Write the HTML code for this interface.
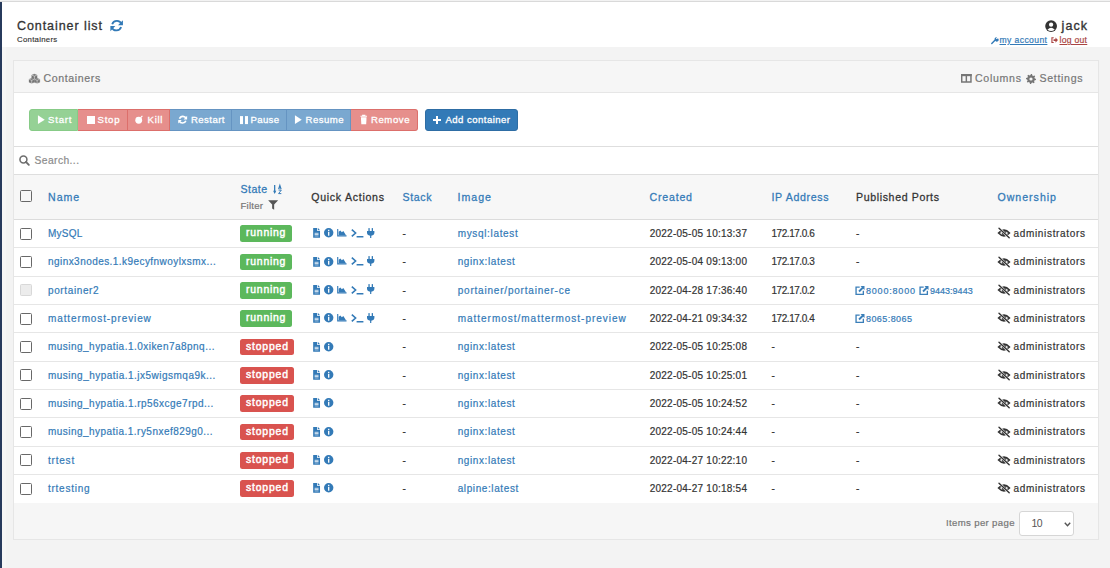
<!DOCTYPE html>
<html><head><meta charset="utf-8"><title>Container list</title>
<style>
html,body{margin:0;padding:0;}
body{width:1110px;height:568px;overflow:hidden;position:relative;background:#f3f3f3;font-family:"Liberation Sans",sans-serif;}
.t{position:absolute;white-space:nowrap;line-height:1;}
svg{overflow:visible;}
</style></head><body>
<div style="position:absolute;left:0px;top:0px;width:1110px;height:1px;background:#f2f2f2;"></div>
<div style="position:absolute;left:0px;top:1px;width:1110px;height:1px;background:#d9d9d9;"></div>
<div style="position:absolute;left:0px;top:2px;width:1110px;height:45px;background:#fff;"></div>
<div style="position:absolute;left:0px;top:2px;width:2px;height:566px;background:#273a5c;"></div>
<div style="position:absolute;left:2px;top:47px;width:4px;height:521px;background:#f6f6f6;"></div>
<div style="position:absolute;left:13px;top:60px;width:1086px;height:480px;background:#fff;border:1px solid #e6e6e6;box-sizing:border-box;"></div>
<div style="position:absolute;left:14px;top:61px;width:1084px;height:32px;background:#f6f6f6;border-bottom:1px solid #e6e6e6;box-sizing:border-box;"></div>
<div style="position:absolute;left:14px;top:146px;width:1084px;height:1px;background:#dedede;"></div>
<div style="position:absolute;left:14px;top:174px;width:1084px;height:1px;background:#dedede;"></div>
<div style="position:absolute;left:14px;top:175px;width:1084px;height:44.4px;background:#f7f7f7;"></div>
<div style="position:absolute;left:14px;top:219px;width:1084px;height:1px;background:#dcdcdc;"></div>
<div style="position:absolute;left:14px;top:247px;width:1084px;height:1px;background:#e6e6e6;"></div>
<div style="position:absolute;left:14px;top:276px;width:1084px;height:1px;background:#e6e6e6;"></div>
<div style="position:absolute;left:14px;top:304px;width:1084px;height:1px;background:#e6e6e6;"></div>
<div style="position:absolute;left:14px;top:332px;width:1084px;height:1px;background:#e6e6e6;"></div>
<div style="position:absolute;left:14px;top:361px;width:1084px;height:1px;background:#e6e6e6;"></div>
<div style="position:absolute;left:14px;top:389px;width:1084px;height:1px;background:#e6e6e6;"></div>
<div style="position:absolute;left:14px;top:417px;width:1084px;height:1px;background:#e6e6e6;"></div>
<div style="position:absolute;left:14px;top:446px;width:1084px;height:1px;background:#e6e6e6;"></div>
<div style="position:absolute;left:14px;top:474px;width:1084px;height:1px;background:#e6e6e6;"></div>
<div style="position:absolute;left:14px;top:503px;width:1084px;height:36px;background:#f6f6f6;"></div>
<div style="position:absolute;left:29px;top:109px;width:49px;height:22px;background:#95d195;border:1px solid #87cb87;box-sizing:border-box;border-radius:3px 0 0 3px;"></div>
<div style="position:absolute;left:78px;top:109px;width:50px;height:22px;background:#e68f8c;border:1px solid #dc6f6b;box-sizing:border-box;border-left:none;"></div>
<div style="position:absolute;left:128px;top:109px;width:42px;height:22px;background:#e68f8c;border:1px solid #dc6f6b;box-sizing:border-box;border-left:none;"></div>
<div style="position:absolute;left:170px;top:109px;width:62px;height:22px;background:#7aa8d0;border:1px solid #6594c2;box-sizing:border-box;border-left:none;"></div>
<div style="position:absolute;left:232px;top:109px;width:55px;height:22px;background:#7aa8d0;border:1px solid #6594c2;box-sizing:border-box;border-left:none;"></div>
<div style="position:absolute;left:287px;top:109px;width:64px;height:22px;background:#7aa8d0;border:1px solid #6594c2;box-sizing:border-box;border-left:none;"></div>
<div style="position:absolute;left:351px;top:109px;width:67px;height:22px;background:#e68f8c;border:1px solid #dc6f6b;box-sizing:border-box;border-left:none;border-radius:0 3px 3px 0;"></div>
<div style="position:absolute;left:425px;top:109px;width:93px;height:22px;background:#337ab7;border:1px solid #2e6da4;box-sizing:border-box;border-radius:3px;"></div>
<div style="position:absolute;left:1019.2px;top:511.2px;width:55.2px;height:24.6px;background:#fff;border:1px solid #d6d6d6;box-sizing:border-box;border-radius:3px;"></div>
<svg style="position:absolute;left:1064.3px;top:521.8px;" width="7" height="5" viewBox="0 0 7 5"><path d="M0.8 0.8 L3.5 3.8 L6.2 0.8" fill="none" stroke="#555" stroke-width="1.4"/></svg>
<div style="position:absolute;left:20px;top:189.5px;width:12px;height:12px;border:1.8px solid #686868;box-sizing:border-box;border-radius:1.5px;"></div>
<div style="position:absolute;left:20px;top:227.6px;width:12px;height:12px;border:1.8px solid #686868;box-sizing:border-box;border-radius:1.5px;"></div>
<div style="position:absolute;left:20px;top:255.9px;width:12px;height:12px;border:1.8px solid #686868;box-sizing:border-box;border-radius:1.5px;"></div>
<div style="position:absolute;left:20px;top:284.3px;width:12px;height:12px;border:1.8px solid #d8d8d8;box-sizing:border-box;border-radius:1.5px;background:#ececec;"></div>
<div style="position:absolute;left:20px;top:312.6px;width:12px;height:12px;border:1.8px solid #686868;box-sizing:border-box;border-radius:1.5px;"></div>
<div style="position:absolute;left:20px;top:340.9px;width:12px;height:12px;border:1.8px solid #686868;box-sizing:border-box;border-radius:1.5px;"></div>
<div style="position:absolute;left:20px;top:369.2px;width:12px;height:12px;border:1.8px solid #686868;box-sizing:border-box;border-radius:1.5px;"></div>
<div style="position:absolute;left:20px;top:397.6px;width:12px;height:12px;border:1.8px solid #686868;box-sizing:border-box;border-radius:1.5px;"></div>
<div style="position:absolute;left:20px;top:425.9px;width:12px;height:12px;border:1.8px solid #686868;box-sizing:border-box;border-radius:1.5px;"></div>
<div style="position:absolute;left:20px;top:454.2px;width:12px;height:12px;border:1.8px solid #686868;box-sizing:border-box;border-radius:1.5px;"></div>
<div style="position:absolute;left:20px;top:482.6px;width:12px;height:12px;border:1.8px solid #686868;box-sizing:border-box;border-radius:1.5px;"></div>
<div style="position:absolute;left:240px;top:225.3px;width:51.9px;height:16.8px;background:#5cb85c;border-radius:2.5px;"></div>
<div style="position:absolute;left:240px;top:253.6px;width:51.9px;height:16.8px;background:#5cb85c;border-radius:2.5px;"></div>
<div style="position:absolute;left:240px;top:282.0px;width:51.9px;height:16.8px;background:#5cb85c;border-radius:2.5px;"></div>
<div style="position:absolute;left:240px;top:310.3px;width:51.9px;height:16.8px;background:#5cb85c;border-radius:2.5px;"></div>
<div style="position:absolute;left:240px;top:338.6px;width:53.7px;height:16.8px;background:#d9534f;border-radius:2.5px;"></div>
<div style="position:absolute;left:240px;top:366.9px;width:53.7px;height:16.8px;background:#d9534f;border-radius:2.5px;"></div>
<div style="position:absolute;left:240px;top:395.3px;width:53.7px;height:16.8px;background:#d9534f;border-radius:2.5px;"></div>
<div style="position:absolute;left:240px;top:423.6px;width:53.7px;height:16.8px;background:#d9534f;border-radius:2.5px;"></div>
<div style="position:absolute;left:240px;top:451.9px;width:53.7px;height:16.8px;background:#d9534f;border-radius:2.5px;"></div>
<div style="position:absolute;left:240px;top:480.3px;width:53.7px;height:16.8px;background:#d9534f;border-radius:2.5px;"></div>
<svg style="position:absolute;left:109.6px;top:18.7px;" width="13.3" height="13.3" viewBox="0 0 14 14"><path d="M12.2 5.2 A5.3 5.3 0 0 0 2.3 5.6" fill="none" stroke="#337ab7" stroke-width="1.9"/><path d="M13.6 1.2 L13.6 6.6 L8.4 6.6 Z" fill="#337ab7"/><path d="M1.8 8.8 A5.3 5.3 0 0 0 11.7 8.4" fill="none" stroke="#337ab7" stroke-width="1.9"/><path d="M0.4 12.8 L0.4 7.4 L5.6 7.4 Z" fill="#337ab7"/></svg>
<svg style="position:absolute;left:1045.4px;top:19.8px;" width="12.2" height="12.2" viewBox="0 0 12 12"><circle cx="6" cy="6" r="5.8" fill="#333"/><circle cx="6" cy="4.6" r="2.1" fill="#fff"/><path d="M2.4 9.6 Q6 5.8 9.6 9.6 Q6 12 2.4 9.6Z" fill="#fff"/></svg>
<svg style="position:absolute;left:990.8px;top:36.5px;" width="7.5" height="7" viewBox="0 0 8 8"><path d="M0.6 7.4 L4.2 3.8" stroke="#337ab7" stroke-width="1.6" stroke-linecap="round"/><path d="M4.2 3.8 A2.2 2.2 0 1 0 7.6 1.4 L6.6 2.4 L5.6 2.4 L5.6 1.4 L6.6 0.4 A2.2 2.2 0 0 0 4.2 3.8Z" fill="#337ab7"/></svg>
<svg style="position:absolute;left:1050.8px;top:37px;" width="7.2" height="6.2" viewBox="0 0 8 7"><path d="M3 0.8 L1 0.8 L1 6.2 L3 6.2" fill="none" stroke="#a94442" stroke-width="1.3"/><path d="M2.8 2.6 L5 2.6 L5 0.6 L7.8 3.5 L5 6.4 L5 4.4 L2.8 4.4Z" fill="#a94442"/></svg>
<svg style="position:absolute;left:28.5px;top:73.5px;" width="10.8" height="9.4" viewBox="0 0 12 10.4"><g fill="#767676" stroke="#767676" stroke-width="0.3" stroke-linejoin="round"><path d="M6 0 L9 1.2 L9 4.6 L6 5.8 L3 4.6 L3 1.2Z"/><path d="M3 4.6 L6 5.8 L6 9.2 L3 10.4 L0 9.2 L0 5.8Z"/><path d="M9 4.6 L12 5.8 L12 9.2 L9 10.4 L6 9.2 L6 5.8Z"/></g><g fill="none" stroke="#f6f6f6" stroke-width="0.6"><path d="M3.2 1.3 L6 2.4 L8.8 1.3 M6 2.4 V5.6"/><path d="M0.2 5.9 L3 7 L5.8 5.9 M3 7 V10.2"/><path d="M6.2 5.9 L9 7 L11.8 5.9 M9 7 V10.2"/></g></svg>
<svg style="position:absolute;left:961px;top:73.8px;" width="10.7" height="8.8" viewBox="0 0 11 9"><path d="M0.75 0.75 H10.25 V8.25 H0.75Z M5.5 2 V8.25" fill="none" stroke="#767676" stroke-width="1.5"/><rect x="0" y="0" width="11" height="2.2" fill="#767676"/></svg>
<svg style="position:absolute;left:1025.8px;top:74.3px;" width="10" height="10" viewBox="0 0 10 10"><path d="M10.00 5.00 L9.90 5.98 L8.42 6.42 L8.08 7.06 L8.54 8.54 L7.78 9.16 L6.42 8.42 L5.72 8.63 L5.00 10.00 L4.02 9.90 L3.58 8.42 L2.94 8.08 L1.46 8.54 L0.84 7.78 L1.58 6.42 L1.37 5.72 L0.00 5.00 L0.10 4.02 L1.58 3.58 L1.92 2.94 L1.46 1.46 L2.22 0.84 L3.58 1.58 L4.28 1.37 L5.00 0.00 L5.98 0.10 L6.42 1.58 L7.06 1.92 L8.54 1.46 L9.16 2.22 L8.42 3.58 L8.63 4.28Z" fill="#767676"/><circle cx="5" cy="5" r="1.6" fill="#f6f6f6"/></svg>
<svg style="position:absolute;left:37px;top:115px;" width="8.4" height="9.3" viewBox="0 0 8 10"><path d="M0.5 0.4 L7.8 5 L0.5 9.6Z" fill="#fff"/></svg>
<svg style="position:absolute;left:86.5px;top:115.8px;" width="8" height="8" viewBox="0 0 8 8"><rect width="8" height="8" fill="#fff"/></svg>
<svg style="position:absolute;left:135.2px;top:115px;" width="8.8" height="9" viewBox="0 0 9 9"><circle cx="3.8" cy="5.3" r="3.5" fill="#fff"/><path d="M5.8 2.6 L7.6 0.8" stroke="#fff" stroke-width="1.2"/></svg>
<svg style="position:absolute;left:177.6px;top:115px;" width="9.4" height="9.4" viewBox="0 0 14 14"><path d="M12.2 5.2 A5.3 5.3 0 0 0 2.3 5.6" fill="none" stroke="#fff" stroke-width="2.4"/><path d="M13.6 1.2 L13.6 6.6 L8.4 6.6 Z" fill="#fff"/><path d="M1.8 8.8 A5.3 5.3 0 0 0 11.7 8.4" fill="none" stroke="#fff" stroke-width="2.4"/><path d="M0.4 12.8 L0.4 7.4 L5.6 7.4 Z" fill="#fff"/></svg>
<svg style="position:absolute;left:240px;top:115.5px;" width="8" height="8.2" viewBox="0 0 8 8"><rect x="0" y="0" width="3" height="8" fill="#fff"/><rect x="5" y="0" width="3" height="8" fill="#fff"/></svg>
<svg style="position:absolute;left:294.3px;top:115px;" width="8.4" height="9.3" viewBox="0 0 8 10"><path d="M0.5 0.4 L7.8 5 L0.5 9.6Z" fill="#fff"/></svg>
<svg style="position:absolute;left:359.5px;top:114.5px;" width="7.5" height="9.5" viewBox="0 0 8 10"><path d="M0.5 1.2 H7.5 M2.8 1.2 V0.2 H5.2 V1.2" stroke="#fff" stroke-width="1.1" fill="none"/><path d="M1 2.2 H7 L6.6 9.8 H1.4Z" fill="#fff"/><path d="M3 3.5 V8.6 M5 3.5 V8.6" stroke="#7aa8d0" stroke-width="0" /></svg>
<svg style="position:absolute;left:433px;top:115.8px;" width="8" height="8" viewBox="0 0 8 8"><path d="M4 0 V8 M0 4 H8" stroke="#fff" stroke-width="2"/></svg>
<svg style="position:absolute;left:19.4px;top:154.5px;" width="10.6" height="10.6" viewBox="0 0 11 11"><circle cx="4.6" cy="4.6" r="3.6" fill="none" stroke="#6e6e6e" stroke-width="1.6"/><path d="M7.2 7.2 L10.2 10.2" stroke="#6e6e6e" stroke-width="2" stroke-linecap="round"/></svg>
<svg style="position:absolute;left:272.8px;top:185.2px;" width="9.6" height="9.2" viewBox="0 0 9.6 9.4"><path d="M1.6 0 V7.6" stroke="#337ab7" stroke-width="1.3"/><path d="M0 6 L1.6 9.2 L3.2 6Z" fill="#337ab7"/><path d="M5.6 4.2 L6.9 0.3 L8.2 4.2 M6 3.1 H7.8" fill="none" stroke="#337ab7" stroke-width="1.1"/><path d="M5.6 5.2 H8.4 L5.6 8.8 H8.4" fill="none" stroke="#337ab7" stroke-width="1"/></svg>
<svg style="position:absolute;left:267.5px;top:200px;" width="10.3" height="10" viewBox="0 0 10 10"><path d="M0 0.3 H10 L6 4.6 V9.8 L4 8.4 V4.6Z" fill="#555"/></svg>
<svg style="position:absolute;left:312.8px;top:228.20000000000002px;" width="7.2" height="9.8" viewBox="0 0 7 10"><path d="M0 0 H4.1 V3 H7 V10 H0Z" fill="#337ab7"/><path d="M4.9 0 L7 2.2 H4.9Z" fill="#337ab7"/><path d="M1.5 5.4 H5.5" stroke="#fff" stroke-width="0.8"/><path d="M1.5 6.9 H5.5" stroke="#fff" stroke-width="1"/><path d="M1.5 8.4 H5.5" stroke="#fff" stroke-width="0.6" stroke-opacity="0.6"/></svg>
<svg style="position:absolute;left:323.6px;top:228.20000000000002px;" width="9.4" height="9.4" viewBox="0 0 10 10"><circle cx="5" cy="5" r="5" fill="#337ab7"/><rect x="4.3" y="4" width="1.4" height="4.2" fill="#fff"/><rect x="4.3" y="1.9" width="1.4" height="1.3" fill="#fff"/></svg>
<svg style="position:absolute;left:337.2px;top:229.10000000000002px;" width="9.7" height="7.5" viewBox="0 0 10 8"><path d="M0.6 0 V7.3 H10" fill="none" stroke="#337ab7" stroke-width="1.2"/><path d="M1.6 6.6 V3 L3.4 1.6 L5 3.4 L6.6 2 L9.4 6.6Z" fill="#337ab7"/></svg>
<svg style="position:absolute;left:350.8px;top:229.10000000000002px;" width="12.5" height="8.5" viewBox="0 0 12.5 8.5"><path d="M0.8 0.6 L4.6 4 L0.8 7.4" fill="none" stroke="#337ab7" stroke-width="1.6"/><rect x="5.6" y="7" width="6.8" height="1.5" fill="#337ab7"/></svg>
<svg style="position:absolute;left:366.7px;top:227.8px;" width="7.4" height="10.2" viewBox="0 0 7.4 10"><rect x="1.4" y="0" width="1.3" height="3" fill="#337ab7"/><rect x="4.7" y="0" width="1.3" height="3" fill="#337ab7"/><path d="M0 2.8 H7.4 V4.6 Q7.4 7 4.3 7.6 V10 H3.1 V7.6 Q0 7 0 4.6Z" fill="#337ab7"/></svg>
<svg style="position:absolute;left:997.6px;top:228.4px;" width="12" height="10" viewBox="0 0 12 10"><path d="M0.6 5 Q6 -0.8 11.4 5 Q6 10.8 0.6 5Z" fill="none" stroke="#333" stroke-width="1.7"/><circle cx="6" cy="5" r="2.3" fill="#333"/><path d="M1 0.2 L11.2 9.8" stroke="#fff" stroke-width="2.4"/><path d="M1 0.2 L11.2 9.8" stroke="#333" stroke-width="1.4" stroke-linecap="round"/></svg>
<svg style="position:absolute;left:312.8px;top:256.53000000000003px;" width="7.2" height="9.8" viewBox="0 0 7 10"><path d="M0 0 H4.1 V3 H7 V10 H0Z" fill="#337ab7"/><path d="M4.9 0 L7 2.2 H4.9Z" fill="#337ab7"/><path d="M1.5 5.4 H5.5" stroke="#fff" stroke-width="0.8"/><path d="M1.5 6.9 H5.5" stroke="#fff" stroke-width="1"/><path d="M1.5 8.4 H5.5" stroke="#fff" stroke-width="0.6" stroke-opacity="0.6"/></svg>
<svg style="position:absolute;left:323.6px;top:256.53000000000003px;" width="9.4" height="9.4" viewBox="0 0 10 10"><circle cx="5" cy="5" r="5" fill="#337ab7"/><rect x="4.3" y="4" width="1.4" height="4.2" fill="#fff"/><rect x="4.3" y="1.9" width="1.4" height="1.3" fill="#fff"/></svg>
<svg style="position:absolute;left:337.2px;top:257.43px;" width="9.7" height="7.5" viewBox="0 0 10 8"><path d="M0.6 0 V7.3 H10" fill="none" stroke="#337ab7" stroke-width="1.2"/><path d="M1.6 6.6 V3 L3.4 1.6 L5 3.4 L6.6 2 L9.4 6.6Z" fill="#337ab7"/></svg>
<svg style="position:absolute;left:350.8px;top:257.43px;" width="12.5" height="8.5" viewBox="0 0 12.5 8.5"><path d="M0.8 0.6 L4.6 4 L0.8 7.4" fill="none" stroke="#337ab7" stroke-width="1.6"/><rect x="5.6" y="7" width="6.8" height="1.5" fill="#337ab7"/></svg>
<svg style="position:absolute;left:366.7px;top:256.13000000000005px;" width="7.4" height="10.2" viewBox="0 0 7.4 10"><rect x="1.4" y="0" width="1.3" height="3" fill="#337ab7"/><rect x="4.7" y="0" width="1.3" height="3" fill="#337ab7"/><path d="M0 2.8 H7.4 V4.6 Q7.4 7 4.3 7.6 V10 H3.1 V7.6 Q0 7 0 4.6Z" fill="#337ab7"/></svg>
<svg style="position:absolute;left:997.6px;top:256.73px;" width="12" height="10" viewBox="0 0 12 10"><path d="M0.6 5 Q6 -0.8 11.4 5 Q6 10.8 0.6 5Z" fill="none" stroke="#333" stroke-width="1.7"/><circle cx="6" cy="5" r="2.3" fill="#333"/><path d="M1 0.2 L11.2 9.8" stroke="#fff" stroke-width="2.4"/><path d="M1 0.2 L11.2 9.8" stroke="#333" stroke-width="1.4" stroke-linecap="round"/></svg>
<svg style="position:absolute;left:312.8px;top:284.86px;" width="7.2" height="9.8" viewBox="0 0 7 10"><path d="M0 0 H4.1 V3 H7 V10 H0Z" fill="#337ab7"/><path d="M4.9 0 L7 2.2 H4.9Z" fill="#337ab7"/><path d="M1.5 5.4 H5.5" stroke="#fff" stroke-width="0.8"/><path d="M1.5 6.9 H5.5" stroke="#fff" stroke-width="1"/><path d="M1.5 8.4 H5.5" stroke="#fff" stroke-width="0.6" stroke-opacity="0.6"/></svg>
<svg style="position:absolute;left:323.6px;top:284.86px;" width="9.4" height="9.4" viewBox="0 0 10 10"><circle cx="5" cy="5" r="5" fill="#337ab7"/><rect x="4.3" y="4" width="1.4" height="4.2" fill="#fff"/><rect x="4.3" y="1.9" width="1.4" height="1.3" fill="#fff"/></svg>
<svg style="position:absolute;left:337.2px;top:285.76px;" width="9.7" height="7.5" viewBox="0 0 10 8"><path d="M0.6 0 V7.3 H10" fill="none" stroke="#337ab7" stroke-width="1.2"/><path d="M1.6 6.6 V3 L3.4 1.6 L5 3.4 L6.6 2 L9.4 6.6Z" fill="#337ab7"/></svg>
<svg style="position:absolute;left:350.8px;top:285.76px;" width="12.5" height="8.5" viewBox="0 0 12.5 8.5"><path d="M0.8 0.6 L4.6 4 L0.8 7.4" fill="none" stroke="#337ab7" stroke-width="1.6"/><rect x="5.6" y="7" width="6.8" height="1.5" fill="#337ab7"/></svg>
<svg style="position:absolute;left:366.7px;top:284.46000000000004px;" width="7.4" height="10.2" viewBox="0 0 7.4 10"><rect x="1.4" y="0" width="1.3" height="3" fill="#337ab7"/><rect x="4.7" y="0" width="1.3" height="3" fill="#337ab7"/><path d="M0 2.8 H7.4 V4.6 Q7.4 7 4.3 7.6 V10 H3.1 V7.6 Q0 7 0 4.6Z" fill="#337ab7"/></svg>
<svg style="position:absolute;left:997.6px;top:285.06px;" width="12" height="10" viewBox="0 0 12 10"><path d="M0.6 5 Q6 -0.8 11.4 5 Q6 10.8 0.6 5Z" fill="none" stroke="#333" stroke-width="1.7"/><circle cx="6" cy="5" r="2.3" fill="#333"/><path d="M1 0.2 L11.2 9.8" stroke="#fff" stroke-width="2.4"/><path d="M1 0.2 L11.2 9.8" stroke="#333" stroke-width="1.4" stroke-linecap="round"/></svg>
<svg style="position:absolute;left:855.4px;top:285.76px;" width="9.8" height="9.6" viewBox="0 0 10 10"><path d="M4.8 1.2 H1 V8.8 H8.6 V5" fill="none" stroke="#3b7fb9" stroke-width="1.4"/><path d="M5.6 0 H9.8 V4.2 L8.4 2.8 L4.8 6.4 L3.4 5 L7 1.4Z" fill="#3b7fb9"/></svg>
<svg style="position:absolute;left:919.3px;top:285.76px;" width="9.8" height="9.6" viewBox="0 0 10 10"><path d="M4.8 1.2 H1 V8.8 H8.6 V5" fill="none" stroke="#3b7fb9" stroke-width="1.4"/><path d="M5.6 0 H9.8 V4.2 L8.4 2.8 L4.8 6.4 L3.4 5 L7 1.4Z" fill="#3b7fb9"/></svg>
<svg style="position:absolute;left:312.8px;top:313.19px;" width="7.2" height="9.8" viewBox="0 0 7 10"><path d="M0 0 H4.1 V3 H7 V10 H0Z" fill="#337ab7"/><path d="M4.9 0 L7 2.2 H4.9Z" fill="#337ab7"/><path d="M1.5 5.4 H5.5" stroke="#fff" stroke-width="0.8"/><path d="M1.5 6.9 H5.5" stroke="#fff" stroke-width="1"/><path d="M1.5 8.4 H5.5" stroke="#fff" stroke-width="0.6" stroke-opacity="0.6"/></svg>
<svg style="position:absolute;left:323.6px;top:313.19px;" width="9.4" height="9.4" viewBox="0 0 10 10"><circle cx="5" cy="5" r="5" fill="#337ab7"/><rect x="4.3" y="4" width="1.4" height="4.2" fill="#fff"/><rect x="4.3" y="1.9" width="1.4" height="1.3" fill="#fff"/></svg>
<svg style="position:absolute;left:337.2px;top:314.09px;" width="9.7" height="7.5" viewBox="0 0 10 8"><path d="M0.6 0 V7.3 H10" fill="none" stroke="#337ab7" stroke-width="1.2"/><path d="M1.6 6.6 V3 L3.4 1.6 L5 3.4 L6.6 2 L9.4 6.6Z" fill="#337ab7"/></svg>
<svg style="position:absolute;left:350.8px;top:314.09px;" width="12.5" height="8.5" viewBox="0 0 12.5 8.5"><path d="M0.8 0.6 L4.6 4 L0.8 7.4" fill="none" stroke="#337ab7" stroke-width="1.6"/><rect x="5.6" y="7" width="6.8" height="1.5" fill="#337ab7"/></svg>
<svg style="position:absolute;left:366.7px;top:312.79px;" width="7.4" height="10.2" viewBox="0 0 7.4 10"><rect x="1.4" y="0" width="1.3" height="3" fill="#337ab7"/><rect x="4.7" y="0" width="1.3" height="3" fill="#337ab7"/><path d="M0 2.8 H7.4 V4.6 Q7.4 7 4.3 7.6 V10 H3.1 V7.6 Q0 7 0 4.6Z" fill="#337ab7"/></svg>
<svg style="position:absolute;left:997.6px;top:313.39px;" width="12" height="10" viewBox="0 0 12 10"><path d="M0.6 5 Q6 -0.8 11.4 5 Q6 10.8 0.6 5Z" fill="none" stroke="#333" stroke-width="1.7"/><circle cx="6" cy="5" r="2.3" fill="#333"/><path d="M1 0.2 L11.2 9.8" stroke="#fff" stroke-width="2.4"/><path d="M1 0.2 L11.2 9.8" stroke="#333" stroke-width="1.4" stroke-linecap="round"/></svg>
<svg style="position:absolute;left:855.4px;top:314.09px;" width="9.8" height="9.6" viewBox="0 0 10 10"><path d="M4.8 1.2 H1 V8.8 H8.6 V5" fill="none" stroke="#3b7fb9" stroke-width="1.4"/><path d="M5.6 0 H9.8 V4.2 L8.4 2.8 L4.8 6.4 L3.4 5 L7 1.4Z" fill="#3b7fb9"/></svg>
<svg style="position:absolute;left:312.8px;top:341.52000000000004px;" width="7.2" height="9.8" viewBox="0 0 7 10"><path d="M0 0 H4.1 V3 H7 V10 H0Z" fill="#337ab7"/><path d="M4.9 0 L7 2.2 H4.9Z" fill="#337ab7"/><path d="M1.5 5.4 H5.5" stroke="#fff" stroke-width="0.8"/><path d="M1.5 6.9 H5.5" stroke="#fff" stroke-width="1"/><path d="M1.5 8.4 H5.5" stroke="#fff" stroke-width="0.6" stroke-opacity="0.6"/></svg>
<svg style="position:absolute;left:323.6px;top:341.52000000000004px;" width="9.4" height="9.4" viewBox="0 0 10 10"><circle cx="5" cy="5" r="5" fill="#337ab7"/><rect x="4.3" y="4" width="1.4" height="4.2" fill="#fff"/><rect x="4.3" y="1.9" width="1.4" height="1.3" fill="#fff"/></svg>
<svg style="position:absolute;left:997.6px;top:341.72px;" width="12" height="10" viewBox="0 0 12 10"><path d="M0.6 5 Q6 -0.8 11.4 5 Q6 10.8 0.6 5Z" fill="none" stroke="#333" stroke-width="1.7"/><circle cx="6" cy="5" r="2.3" fill="#333"/><path d="M1 0.2 L11.2 9.8" stroke="#fff" stroke-width="2.4"/><path d="M1 0.2 L11.2 9.8" stroke="#333" stroke-width="1.4" stroke-linecap="round"/></svg>
<svg style="position:absolute;left:312.8px;top:369.84999999999997px;" width="7.2" height="9.8" viewBox="0 0 7 10"><path d="M0 0 H4.1 V3 H7 V10 H0Z" fill="#337ab7"/><path d="M4.9 0 L7 2.2 H4.9Z" fill="#337ab7"/><path d="M1.5 5.4 H5.5" stroke="#fff" stroke-width="0.8"/><path d="M1.5 6.9 H5.5" stroke="#fff" stroke-width="1"/><path d="M1.5 8.4 H5.5" stroke="#fff" stroke-width="0.6" stroke-opacity="0.6"/></svg>
<svg style="position:absolute;left:323.6px;top:369.84999999999997px;" width="9.4" height="9.4" viewBox="0 0 10 10"><circle cx="5" cy="5" r="5" fill="#337ab7"/><rect x="4.3" y="4" width="1.4" height="4.2" fill="#fff"/><rect x="4.3" y="1.9" width="1.4" height="1.3" fill="#fff"/></svg>
<svg style="position:absolute;left:997.6px;top:370.04999999999995px;" width="12" height="10" viewBox="0 0 12 10"><path d="M0.6 5 Q6 -0.8 11.4 5 Q6 10.8 0.6 5Z" fill="none" stroke="#333" stroke-width="1.7"/><circle cx="6" cy="5" r="2.3" fill="#333"/><path d="M1 0.2 L11.2 9.8" stroke="#fff" stroke-width="2.4"/><path d="M1 0.2 L11.2 9.8" stroke="#333" stroke-width="1.4" stroke-linecap="round"/></svg>
<svg style="position:absolute;left:312.8px;top:398.18px;" width="7.2" height="9.8" viewBox="0 0 7 10"><path d="M0 0 H4.1 V3 H7 V10 H0Z" fill="#337ab7"/><path d="M4.9 0 L7 2.2 H4.9Z" fill="#337ab7"/><path d="M1.5 5.4 H5.5" stroke="#fff" stroke-width="0.8"/><path d="M1.5 6.9 H5.5" stroke="#fff" stroke-width="1"/><path d="M1.5 8.4 H5.5" stroke="#fff" stroke-width="0.6" stroke-opacity="0.6"/></svg>
<svg style="position:absolute;left:323.6px;top:398.18px;" width="9.4" height="9.4" viewBox="0 0 10 10"><circle cx="5" cy="5" r="5" fill="#337ab7"/><rect x="4.3" y="4" width="1.4" height="4.2" fill="#fff"/><rect x="4.3" y="1.9" width="1.4" height="1.3" fill="#fff"/></svg>
<svg style="position:absolute;left:997.6px;top:398.38px;" width="12" height="10" viewBox="0 0 12 10"><path d="M0.6 5 Q6 -0.8 11.4 5 Q6 10.8 0.6 5Z" fill="none" stroke="#333" stroke-width="1.7"/><circle cx="6" cy="5" r="2.3" fill="#333"/><path d="M1 0.2 L11.2 9.8" stroke="#fff" stroke-width="2.4"/><path d="M1 0.2 L11.2 9.8" stroke="#333" stroke-width="1.4" stroke-linecap="round"/></svg>
<svg style="position:absolute;left:312.8px;top:426.51000000000005px;" width="7.2" height="9.8" viewBox="0 0 7 10"><path d="M0 0 H4.1 V3 H7 V10 H0Z" fill="#337ab7"/><path d="M4.9 0 L7 2.2 H4.9Z" fill="#337ab7"/><path d="M1.5 5.4 H5.5" stroke="#fff" stroke-width="0.8"/><path d="M1.5 6.9 H5.5" stroke="#fff" stroke-width="1"/><path d="M1.5 8.4 H5.5" stroke="#fff" stroke-width="0.6" stroke-opacity="0.6"/></svg>
<svg style="position:absolute;left:323.6px;top:426.51000000000005px;" width="9.4" height="9.4" viewBox="0 0 10 10"><circle cx="5" cy="5" r="5" fill="#337ab7"/><rect x="4.3" y="4" width="1.4" height="4.2" fill="#fff"/><rect x="4.3" y="1.9" width="1.4" height="1.3" fill="#fff"/></svg>
<svg style="position:absolute;left:997.6px;top:426.71000000000004px;" width="12" height="10" viewBox="0 0 12 10"><path d="M0.6 5 Q6 -0.8 11.4 5 Q6 10.8 0.6 5Z" fill="none" stroke="#333" stroke-width="1.7"/><circle cx="6" cy="5" r="2.3" fill="#333"/><path d="M1 0.2 L11.2 9.8" stroke="#fff" stroke-width="2.4"/><path d="M1 0.2 L11.2 9.8" stroke="#333" stroke-width="1.4" stroke-linecap="round"/></svg>
<svg style="position:absolute;left:312.8px;top:454.84px;" width="7.2" height="9.8" viewBox="0 0 7 10"><path d="M0 0 H4.1 V3 H7 V10 H0Z" fill="#337ab7"/><path d="M4.9 0 L7 2.2 H4.9Z" fill="#337ab7"/><path d="M1.5 5.4 H5.5" stroke="#fff" stroke-width="0.8"/><path d="M1.5 6.9 H5.5" stroke="#fff" stroke-width="1"/><path d="M1.5 8.4 H5.5" stroke="#fff" stroke-width="0.6" stroke-opacity="0.6"/></svg>
<svg style="position:absolute;left:323.6px;top:454.84px;" width="9.4" height="9.4" viewBox="0 0 10 10"><circle cx="5" cy="5" r="5" fill="#337ab7"/><rect x="4.3" y="4" width="1.4" height="4.2" fill="#fff"/><rect x="4.3" y="1.9" width="1.4" height="1.3" fill="#fff"/></svg>
<svg style="position:absolute;left:997.6px;top:455.03999999999996px;" width="12" height="10" viewBox="0 0 12 10"><path d="M0.6 5 Q6 -0.8 11.4 5 Q6 10.8 0.6 5Z" fill="none" stroke="#333" stroke-width="1.7"/><circle cx="6" cy="5" r="2.3" fill="#333"/><path d="M1 0.2 L11.2 9.8" stroke="#fff" stroke-width="2.4"/><path d="M1 0.2 L11.2 9.8" stroke="#333" stroke-width="1.4" stroke-linecap="round"/></svg>
<svg style="position:absolute;left:312.8px;top:483.17px;" width="7.2" height="9.8" viewBox="0 0 7 10"><path d="M0 0 H4.1 V3 H7 V10 H0Z" fill="#337ab7"/><path d="M4.9 0 L7 2.2 H4.9Z" fill="#337ab7"/><path d="M1.5 5.4 H5.5" stroke="#fff" stroke-width="0.8"/><path d="M1.5 6.9 H5.5" stroke="#fff" stroke-width="1"/><path d="M1.5 8.4 H5.5" stroke="#fff" stroke-width="0.6" stroke-opacity="0.6"/></svg>
<svg style="position:absolute;left:323.6px;top:483.17px;" width="9.4" height="9.4" viewBox="0 0 10 10"><circle cx="5" cy="5" r="5" fill="#337ab7"/><rect x="4.3" y="4" width="1.4" height="4.2" fill="#fff"/><rect x="4.3" y="1.9" width="1.4" height="1.3" fill="#fff"/></svg>
<svg style="position:absolute;left:997.6px;top:483.37px;" width="12" height="10" viewBox="0 0 12 10"><path d="M0.6 5 Q6 -0.8 11.4 5 Q6 10.8 0.6 5Z" fill="none" stroke="#333" stroke-width="1.7"/><circle cx="6" cy="5" r="2.3" fill="#333"/><path d="M1 0.2 L11.2 9.8" stroke="#fff" stroke-width="2.4"/><path d="M1 0.2 L11.2 9.8" stroke="#333" stroke-width="1.4" stroke-linecap="round"/></svg>
<span class="t" style="left:17.00px;top:20.00px;font-size:12.5px;color:#333;letter-spacing:0.927px;-webkit-text-stroke:0.3px #333;">Container list</span>
<span class="t" style="left:17.00px;top:36.00px;font-size:7.8px;color:#333;letter-spacing:0.276px;-webkit-text-stroke:0.15px #333;">Containers</span>
<span class="t" style="left:1061.60px;top:20.00px;font-size:12.5px;color:#333;letter-spacing:1.055px;-webkit-text-stroke:0.35px #333;">jack</span>
<span class="t" style="left:999.50px;top:36.00px;font-size:8.6px;color:#337ab7;letter-spacing:0.394px;-webkit-text-stroke:0.2px #337ab7;text-decoration:underline;text-decoration-thickness:0.6px;text-underline-offset:1.2px;">my account</span>
<span class="t" style="left:1059.50px;top:36.00px;font-size:8.6px;color:#a94442;letter-spacing:0.281px;-webkit-text-stroke:0.2px #a94442;text-decoration:underline;text-decoration-thickness:0.6px;text-underline-offset:1.2px;">log out</span>
<span class="t" style="left:43.50px;top:73.00px;font-size:10.6px;color:#767676;letter-spacing:0.618px;-webkit-text-stroke:0.2px #767676;">Containers</span>
<span class="t" style="left:975.00px;top:73.00px;font-size:10.6px;color:#767676;letter-spacing:0.698px;-webkit-text-stroke:0.2px #767676;">Columns</span>
<span class="t" style="left:1039.50px;top:73.00px;font-size:10.6px;color:#767676;letter-spacing:0.674px;-webkit-text-stroke:0.2px #767676;">Settings</span>
<span class="t" style="left:48.00px;top:115.00px;font-size:9.6px;color:#fff;letter-spacing:0.809px;-webkit-text-stroke:0.3px #fff;">Start</span>
<span class="t" style="left:97.50px;top:115.00px;font-size:9.6px;color:#fff;letter-spacing:0.750px;-webkit-text-stroke:0.3px #fff;">Stop</span>
<span class="t" style="left:147.50px;top:115.00px;font-size:9.6px;color:#fff;letter-spacing:0.734px;-webkit-text-stroke:0.3px #fff;">Kill</span>
<span class="t" style="left:191.00px;top:115.00px;font-size:9.6px;color:#fff;letter-spacing:0.427px;-webkit-text-stroke:0.3px #fff;">Restart</span>
<span class="t" style="left:250.50px;top:115.00px;font-size:9.6px;color:#fff;letter-spacing:0.324px;-webkit-text-stroke:0.3px #fff;">Pause</span>
<span class="t" style="left:305.50px;top:115.00px;font-size:9.6px;color:#fff;letter-spacing:0.453px;-webkit-text-stroke:0.3px #fff;">Resume</span>
<span class="t" style="left:371.00px;top:115.00px;font-size:9.6px;color:#fff;letter-spacing:0.553px;-webkit-text-stroke:0.3px #fff;">Remove</span>
<span class="t" style="left:445.50px;top:115.00px;font-size:9.6px;color:#fff;letter-spacing:0.441px;-webkit-text-stroke:0.3px #fff;">Add container</span>
<span class="t" style="left:34.50px;top:156.00px;font-size:10.3px;color:#8c8c8c;letter-spacing:0.410px;-webkit-text-stroke:0.2px #8c8c8c;">Search...</span>
<span class="t" style="left:48.00px;top:192.00px;font-size:10.6px;color:#337ab7;letter-spacing:0.978px;-webkit-text-stroke:0.26px #337ab7;">Name</span>
<span class="t" style="left:311.20px;top:192.00px;font-size:10.6px;color:#333333;letter-spacing:0.718px;-webkit-text-stroke:0.26px #333333;">Quick Actions</span>
<span class="t" style="left:402.50px;top:192.00px;font-size:10.6px;color:#337ab7;letter-spacing:0.625px;-webkit-text-stroke:0.26px #337ab7;">Stack</span>
<span class="t" style="left:457.50px;top:192.00px;font-size:10.6px;color:#337ab7;letter-spacing:1.012px;-webkit-text-stroke:0.26px #337ab7;">Image</span>
<span class="t" style="left:649.50px;top:192.00px;font-size:10.6px;color:#337ab7;letter-spacing:0.799px;-webkit-text-stroke:0.26px #337ab7;">Created</span>
<span class="t" style="left:771.50px;top:192.00px;font-size:10.6px;color:#337ab7;letter-spacing:0.661px;-webkit-text-stroke:0.26px #337ab7;">IP Address</span>
<span class="t" style="left:856.00px;top:192.00px;font-size:10.6px;color:#333333;letter-spacing:0.628px;-webkit-text-stroke:0.26px #333333;">Published Ports</span>
<span class="t" style="left:997.50px;top:192.00px;font-size:10.6px;color:#337ab7;letter-spacing:0.982px;-webkit-text-stroke:0.26px #337ab7;">Ownership</span>
<span class="t" style="left:240.40px;top:184.00px;font-size:10.6px;color:#337ab7;letter-spacing:0.513px;-webkit-text-stroke:0.26px #337ab7;">State</span>
<span class="t" style="left:240.40px;top:201.00px;font-size:9.6px;color:#767676;letter-spacing:0.254px;-webkit-text-stroke:0.2px #767676;">Filter</span>
<span class="t" style="left:946.00px;top:518.00px;font-size:9.6px;color:#767676;letter-spacing:0.346px;-webkit-text-stroke:0.2px #767676;">Items per page</span>
<span class="t" style="left:1031.50px;top:518.00px;font-size:10.5px;color:#555;letter-spacing:-0.688px;">10</span>
<span class="t" style="left:48.00px;top:229.00px;font-size:10px;color:#337ab7;letter-spacing:0.214px;-webkit-text-stroke:0.2px #337ab7;">MySQL</span>
<span class="t" style="left:402.50px;top:229.00px;font-size:10px;color:#333333;-webkit-text-stroke:0.2px #333333;">-</span>
<span class="t" style="left:457.70px;top:229.00px;font-size:10px;color:#337ab7;letter-spacing:0.664px;-webkit-text-stroke:0.2px #337ab7;">mysql:latest</span>
<span class="t" style="left:649.70px;top:229.00px;font-size:10px;color:#333333;letter-spacing:0.247px;-webkit-text-stroke:0.2px #333333;">2022-05-05 10:13:37</span>
<span class="t" style="left:771.50px;top:229.00px;font-size:10px;color:#333333;letter-spacing:-0.452px;-webkit-text-stroke:0.2px #333333;">172.17.0.6</span>
<span class="t" style="left:1013.50px;top:229.00px;font-size:10px;color:#333333;letter-spacing:0.668px;-webkit-text-stroke:0.2px #333333;">administrators</span>
<span class="t" style="left:856.00px;top:229.00px;font-size:10px;color:#333333;-webkit-text-stroke:0.2px #333333;">-</span>
<span class="t" style="left:246.00px;top:228.00px;font-size:10.4px;color:#fff;letter-spacing:0.788px;-webkit-text-stroke:0.45px #fff;">running</span>
<span class="t" style="left:48.00px;top:257.00px;font-size:10px;color:#337ab7;letter-spacing:0.443px;-webkit-text-stroke:0.2px #337ab7;">nginx3nodes.1.k9ecyfnwoylxsmx...</span>
<span class="t" style="left:402.50px;top:257.00px;font-size:10px;color:#333333;-webkit-text-stroke:0.2px #333333;">-</span>
<span class="t" style="left:457.70px;top:257.00px;font-size:10px;color:#337ab7;letter-spacing:0.601px;-webkit-text-stroke:0.2px #337ab7;">nginx:latest</span>
<span class="t" style="left:649.70px;top:257.00px;font-size:10px;color:#333333;letter-spacing:0.247px;-webkit-text-stroke:0.2px #333333;">2022-05-04 09:13:00</span>
<span class="t" style="left:771.50px;top:257.00px;font-size:10px;color:#333333;letter-spacing:-0.452px;-webkit-text-stroke:0.2px #333333;">172.17.0.3</span>
<span class="t" style="left:1013.50px;top:257.00px;font-size:10px;color:#333333;letter-spacing:0.668px;-webkit-text-stroke:0.2px #333333;">administrators</span>
<span class="t" style="left:856.00px;top:257.00px;font-size:10px;color:#333333;-webkit-text-stroke:0.2px #333333;">-</span>
<span class="t" style="left:246.00px;top:257.00px;font-size:10.4px;color:#fff;letter-spacing:0.788px;-webkit-text-stroke:0.45px #fff;">running</span>
<span class="t" style="left:48.00px;top:286.00px;font-size:10px;color:#337ab7;letter-spacing:0.619px;-webkit-text-stroke:0.2px #337ab7;">portainer2</span>
<span class="t" style="left:402.50px;top:286.00px;font-size:10px;color:#333333;-webkit-text-stroke:0.2px #333333;">-</span>
<span class="t" style="left:457.70px;top:286.00px;font-size:10px;color:#337ab7;letter-spacing:0.795px;-webkit-text-stroke:0.2px #337ab7;">portainer/portainer-ce</span>
<span class="t" style="left:649.70px;top:286.00px;font-size:10px;color:#333333;letter-spacing:0.247px;-webkit-text-stroke:0.2px #333333;">2022-04-28 17:36:40</span>
<span class="t" style="left:771.50px;top:286.00px;font-size:10px;color:#333333;letter-spacing:-0.452px;-webkit-text-stroke:0.2px #333333;">172.17.0.2</span>
<span class="t" style="left:1013.50px;top:286.00px;font-size:10px;color:#333333;letter-spacing:0.668px;-webkit-text-stroke:0.2px #333333;">administrators</span>
<span class="t" style="left:866.00px;top:287.00px;font-size:9px;color:#337ab7;letter-spacing:0.807px;-webkit-text-stroke:0.2px #337ab7;">8000:8000</span>
<span class="t" style="left:929.90px;top:287.00px;font-size:9px;color:#337ab7;letter-spacing:0.032px;-webkit-text-stroke:0.2px #337ab7;">9443:9443</span>
<span class="t" style="left:246.00px;top:285.00px;font-size:10.4px;color:#fff;letter-spacing:0.788px;-webkit-text-stroke:0.45px #fff;">running</span>
<span class="t" style="left:48.00px;top:314.00px;font-size:10px;color:#337ab7;letter-spacing:0.882px;-webkit-text-stroke:0.2px #337ab7;">mattermost-preview</span>
<span class="t" style="left:402.50px;top:314.00px;font-size:10px;color:#333333;-webkit-text-stroke:0.2px #333333;">-</span>
<span class="t" style="left:457.70px;top:314.00px;font-size:10px;color:#337ab7;letter-spacing:0.982px;-webkit-text-stroke:0.2px #337ab7;">mattermost/mattermost-preview</span>
<span class="t" style="left:649.70px;top:314.00px;font-size:10px;color:#333333;letter-spacing:0.247px;-webkit-text-stroke:0.2px #333333;">2022-04-21 09:34:32</span>
<span class="t" style="left:771.50px;top:314.00px;font-size:10px;color:#333333;letter-spacing:-0.452px;-webkit-text-stroke:0.2px #333333;">172.17.0.4</span>
<span class="t" style="left:1013.50px;top:314.00px;font-size:10px;color:#333333;letter-spacing:0.668px;-webkit-text-stroke:0.2px #333333;">administrators</span>
<span class="t" style="left:866.00px;top:315.00px;font-size:9px;color:#337ab7;letter-spacing:0.432px;-webkit-text-stroke:0.2px #337ab7;">8065:8065</span>
<span class="t" style="left:246.00px;top:313.00px;font-size:10.4px;color:#fff;letter-spacing:0.788px;-webkit-text-stroke:0.45px #fff;">running</span>
<span class="t" style="left:48.00px;top:342.00px;font-size:10px;color:#337ab7;letter-spacing:0.472px;-webkit-text-stroke:0.2px #337ab7;">musing_hypatia.1.0xiken7a8pnq...</span>
<span class="t" style="left:402.50px;top:342.00px;font-size:10px;color:#333333;-webkit-text-stroke:0.2px #333333;">-</span>
<span class="t" style="left:457.70px;top:342.00px;font-size:10px;color:#337ab7;letter-spacing:0.601px;-webkit-text-stroke:0.2px #337ab7;">nginx:latest</span>
<span class="t" style="left:649.70px;top:342.00px;font-size:10px;color:#333333;letter-spacing:0.247px;-webkit-text-stroke:0.2px #333333;">2022-05-05 10:25:08</span>
<span class="t" style="left:771.50px;top:342.00px;font-size:10px;color:#333333;-webkit-text-stroke:0.2px #333333;">-</span>
<span class="t" style="left:1013.50px;top:342.00px;font-size:10px;color:#333333;letter-spacing:0.668px;-webkit-text-stroke:0.2px #333333;">administrators</span>
<span class="t" style="left:856.00px;top:342.00px;font-size:10px;color:#333333;-webkit-text-stroke:0.2px #333333;">-</span>
<span class="t" style="left:246.00px;top:342.00px;font-size:10.4px;color:#fff;letter-spacing:0.836px;-webkit-text-stroke:0.45px #fff;">stopped</span>
<span class="t" style="left:48.00px;top:371.00px;font-size:10px;color:#337ab7;letter-spacing:0.483px;-webkit-text-stroke:0.2px #337ab7;">musing_hypatia.1.jx5wigsmqa9k...</span>
<span class="t" style="left:402.50px;top:371.00px;font-size:10px;color:#333333;-webkit-text-stroke:0.2px #333333;">-</span>
<span class="t" style="left:457.70px;top:371.00px;font-size:10px;color:#337ab7;letter-spacing:0.601px;-webkit-text-stroke:0.2px #337ab7;">nginx:latest</span>
<span class="t" style="left:649.70px;top:371.00px;font-size:10px;color:#333333;letter-spacing:0.247px;-webkit-text-stroke:0.2px #333333;">2022-05-05 10:25:01</span>
<span class="t" style="left:771.50px;top:371.00px;font-size:10px;color:#333333;-webkit-text-stroke:0.2px #333333;">-</span>
<span class="t" style="left:1013.50px;top:371.00px;font-size:10px;color:#333333;letter-spacing:0.668px;-webkit-text-stroke:0.2px #333333;">administrators</span>
<span class="t" style="left:856.00px;top:371.00px;font-size:10px;color:#333333;-webkit-text-stroke:0.2px #333333;">-</span>
<span class="t" style="left:246.00px;top:370.00px;font-size:10.4px;color:#fff;letter-spacing:0.836px;-webkit-text-stroke:0.45px #fff;">stopped</span>
<span class="t" style="left:48.00px;top:399.00px;font-size:10px;color:#337ab7;letter-spacing:0.472px;-webkit-text-stroke:0.2px #337ab7;">musing_hypatia.1.rp56xcge7rpd...</span>
<span class="t" style="left:402.50px;top:399.00px;font-size:10px;color:#333333;-webkit-text-stroke:0.2px #333333;">-</span>
<span class="t" style="left:457.70px;top:399.00px;font-size:10px;color:#337ab7;letter-spacing:0.601px;-webkit-text-stroke:0.2px #337ab7;">nginx:latest</span>
<span class="t" style="left:649.70px;top:399.00px;font-size:10px;color:#333333;letter-spacing:0.247px;-webkit-text-stroke:0.2px #333333;">2022-05-05 10:24:52</span>
<span class="t" style="left:771.50px;top:399.00px;font-size:10px;color:#333333;-webkit-text-stroke:0.2px #333333;">-</span>
<span class="t" style="left:1013.50px;top:399.00px;font-size:10px;color:#333333;letter-spacing:0.668px;-webkit-text-stroke:0.2px #333333;">administrators</span>
<span class="t" style="left:856.00px;top:399.00px;font-size:10px;color:#333333;-webkit-text-stroke:0.2px #333333;">-</span>
<span class="t" style="left:246.00px;top:398.00px;font-size:10.4px;color:#fff;letter-spacing:0.836px;-webkit-text-stroke:0.45px #fff;">stopped</span>
<span class="t" style="left:48.00px;top:427.00px;font-size:10px;color:#337ab7;letter-spacing:0.467px;-webkit-text-stroke:0.2px #337ab7;">musing_hypatia.1.ry5nxef829g0...</span>
<span class="t" style="left:402.50px;top:427.00px;font-size:10px;color:#333333;-webkit-text-stroke:0.2px #333333;">-</span>
<span class="t" style="left:457.70px;top:427.00px;font-size:10px;color:#337ab7;letter-spacing:0.601px;-webkit-text-stroke:0.2px #337ab7;">nginx:latest</span>
<span class="t" style="left:649.70px;top:427.00px;font-size:10px;color:#333333;letter-spacing:0.247px;-webkit-text-stroke:0.2px #333333;">2022-05-05 10:24:44</span>
<span class="t" style="left:771.50px;top:427.00px;font-size:10px;color:#333333;-webkit-text-stroke:0.2px #333333;">-</span>
<span class="t" style="left:1013.50px;top:427.00px;font-size:10px;color:#333333;letter-spacing:0.668px;-webkit-text-stroke:0.2px #333333;">administrators</span>
<span class="t" style="left:856.00px;top:427.00px;font-size:10px;color:#333333;-webkit-text-stroke:0.2px #333333;">-</span>
<span class="t" style="left:246.00px;top:427.00px;font-size:10.4px;color:#fff;letter-spacing:0.836px;-webkit-text-stroke:0.45px #fff;">stopped</span>
<span class="t" style="left:48.00px;top:456.00px;font-size:10px;color:#337ab7;letter-spacing:0.793px;-webkit-text-stroke:0.2px #337ab7;">trtest</span>
<span class="t" style="left:402.50px;top:456.00px;font-size:10px;color:#333333;-webkit-text-stroke:0.2px #333333;">-</span>
<span class="t" style="left:457.70px;top:456.00px;font-size:10px;color:#337ab7;letter-spacing:0.601px;-webkit-text-stroke:0.2px #337ab7;">nginx:latest</span>
<span class="t" style="left:649.70px;top:456.00px;font-size:10px;color:#333333;letter-spacing:0.247px;-webkit-text-stroke:0.2px #333333;">2022-04-27 10:22:10</span>
<span class="t" style="left:771.50px;top:456.00px;font-size:10px;color:#333333;-webkit-text-stroke:0.2px #333333;">-</span>
<span class="t" style="left:1013.50px;top:456.00px;font-size:10px;color:#333333;letter-spacing:0.668px;-webkit-text-stroke:0.2px #333333;">administrators</span>
<span class="t" style="left:856.00px;top:456.00px;font-size:10px;color:#333333;-webkit-text-stroke:0.2px #333333;">-</span>
<span class="t" style="left:246.00px;top:455.00px;font-size:10.4px;color:#fff;letter-spacing:0.836px;-webkit-text-stroke:0.45px #fff;">stopped</span>
<span class="t" style="left:48.00px;top:484.00px;font-size:10px;color:#337ab7;letter-spacing:0.740px;-webkit-text-stroke:0.2px #337ab7;">trtesting</span>
<span class="t" style="left:402.50px;top:484.00px;font-size:10px;color:#333333;-webkit-text-stroke:0.2px #333333;">-</span>
<span class="t" style="left:457.70px;top:484.00px;font-size:10px;color:#337ab7;letter-spacing:0.602px;-webkit-text-stroke:0.2px #337ab7;">alpine:latest</span>
<span class="t" style="left:649.70px;top:484.00px;font-size:10px;color:#333333;letter-spacing:0.247px;-webkit-text-stroke:0.2px #333333;">2022-04-27 10:18:54</span>
<span class="t" style="left:771.50px;top:484.00px;font-size:10px;color:#333333;-webkit-text-stroke:0.2px #333333;">-</span>
<span class="t" style="left:1013.50px;top:484.00px;font-size:10px;color:#333333;letter-spacing:0.668px;-webkit-text-stroke:0.2px #333333;">administrators</span>
<span class="t" style="left:856.00px;top:484.00px;font-size:10px;color:#333333;-webkit-text-stroke:0.2px #333333;">-</span>
<span class="t" style="left:246.00px;top:483.00px;font-size:10.4px;color:#fff;letter-spacing:0.836px;-webkit-text-stroke:0.45px #fff;">stopped</span>
</body></html>
